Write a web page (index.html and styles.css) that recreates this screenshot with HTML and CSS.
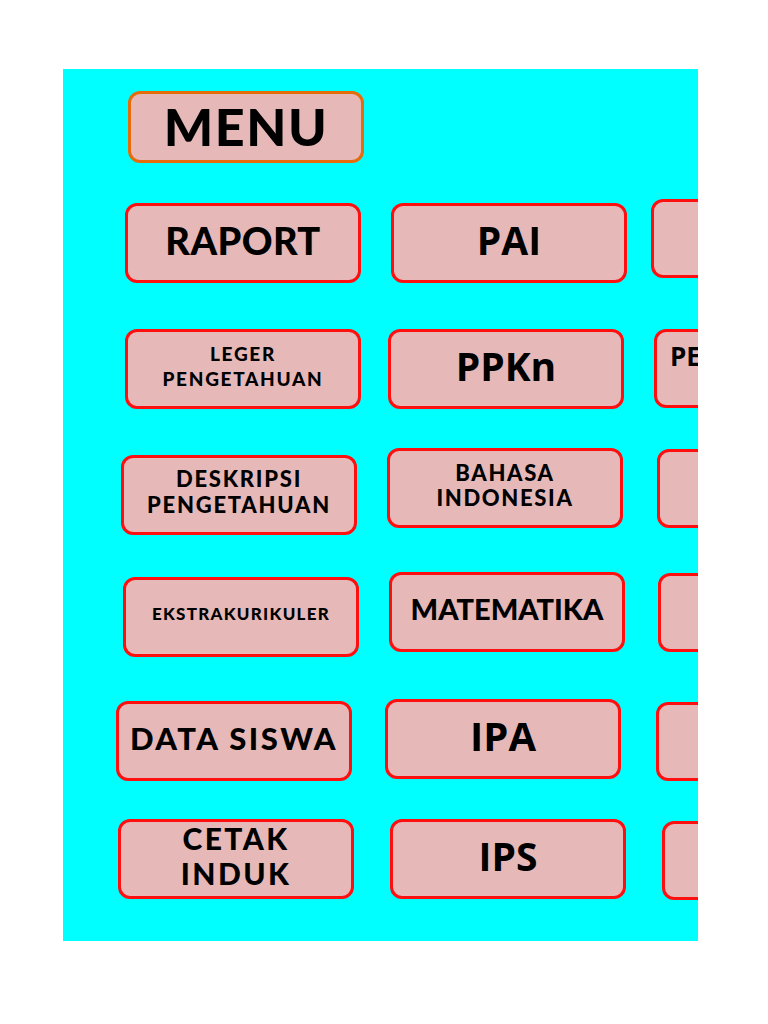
FILE: index.html
```html
<!DOCTYPE html>
<html lang="id">
<head>
<meta charset="utf-8">
<title>MENU</title>
<link rel="stylesheet" href="styles.css">
</head>
<body>
<main class="panel">
  <div class="col">
    <div class="btn menu f">MENU</div>
    <div class="btn raport f">RAPORT</div>
    <div class="btn leger f">LEGER<br>PENGETAHUAN</div>
    <div class="btn deskripsi f">DESKRIPSI<br>PENGETAHUAN</div>
    <div class="btn ekstra f">EKSTRAKURIKULER</div>
    <div class="btn datasiswa f">DATA SISWA</div>
    <div class="btn cetak f">CETAK<br>INDUK</div>
  </div>
  <div class="col">
    <div class="btn pai s">PAI</div>
    <div class="btn ppkn s">PPKn</div>
    <div class="btn bahasa f">BAHASA<br>INDONESIA</div>
    <div class="btn mtk f">MATEMATIKA</div>
    <div class="btn ipa s">IPA</div>
    <div class="btn ips s">IPS</div>
  </div>
  <div class="col">
    <div class="btn c3a"></div>
    <div class="btn c3b penjas s">PENJASORKES</div>
    <div class="btn c3c"></div>
    <div class="btn c3d"></div>
    <div class="btn c3e"></div>
    <div class="btn c3f"></div>
  </div>
</main>
</body>
</html>
```
FILE: styles.css
```css
html, body {
  margin: 0;
  padding: 0;
  background: #ffffff;
}

.panel {
  margin: 69px 0 0 63px;
  width: 635px;
  height: 872px;
  background: #00ffff;
  overflow: hidden;
  display: grid;
  grid-template-columns: 322px 266px 300px;
}

.col {
  display: flex;
  flex-direction: column;
  align-items: flex-start;
}

.btn {
  box-sizing: border-box;
  flex: none;
  width: 236px;
  height: 80px;
  border: 3px solid #ff1010;
  border-radius: 12px;
  background: #e6b9b8;
  color: #000;
  display: flex;
  align-items: center;
  justify-content: center;
  text-align: center;
  white-space: nowrap;
  padding-bottom: 7px;
}

.f {
  font-family: "Lato", "DejaVu Sans", sans-serif;
  font-weight: 900;
  letter-spacing: 0.07em;
}

.s {
  font-family: "Open Sans", "Noto Sans", sans-serif;
  font-weight: 700;
}

/* column 1 */
.menu {
  margin: 22px 0 0 65px;
  height: 72px;
  padding-bottom: 2px;
  border-color: #e46c0a;
  font-size: 52px;
  letter-spacing: 0.03em;
}
.raport { margin: 40px 0 0 62px; font-size: 38px; letter-spacing: 0.01em; }
.leger { margin: 46px 0 0 62px; font-size: 19px; line-height: 25px; letter-spacing: 0.09em; }
.deskripsi { margin: 46px 0 0 58px; font-size: 22px; line-height: 26px; letter-spacing: 0.08em; }
.ekstra { margin: 42px 0 0 60px; font-size: 17px; letter-spacing: 0.075em; }
.datasiswa { margin: 44px 0 0 53px; font-size: 31px; letter-spacing: 0.08em; }
.cetak { margin: 38px 0 0 55px; font-size: 30px; line-height: 35px; letter-spacing: 0.08em; }

/* column 2 */
.pai { margin: 134px 0 0 6px; font-size: 39px; }
.ppkn { margin: 46px 0 0 3px; font-size: 39px; }
.bahasa { margin: 39px 0 0 2px; font-size: 22px; line-height: 25px; letter-spacing: 0.075em; }
.mtk { margin: 44px 0 0 4px; font-size: 29px; letter-spacing: 0; }
.ipa { margin: 47px 0 0 0; font-size: 40px; }
.ips { margin: 40px 0 0 5px; font-size: 39px; }

/* column 3 */
.c3a { margin: 130px 0 0 0; height: 79px; }
.c3b { margin: 51px 0 0 3px; height: 79px; }
.c3c { margin: 41px 0 0 6px; height: 79px; }
.c3d { margin: 45px 0 0 7px; height: 79px; }
.c3e { margin: 50px 0 0 5px; height: 79px; }
.c3f { margin: 40px 0 0 11px; height: 79px; }

.penjas {
  justify-content: flex-start;
  align-items: flex-start;
  padding: 6px 0 0 13px;
  font-size: 26px;
}
```
